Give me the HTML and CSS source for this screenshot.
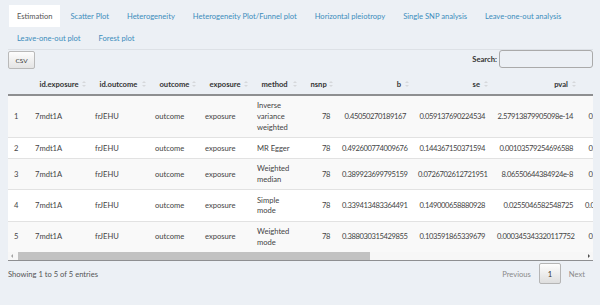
FILE: index.html
```html
<!DOCTYPE html>
<html lang="en">
<head>
    <meta charset="UTF-8">
    <title>MR results</title>
    <link rel="stylesheet" href="styles.css">
</head>
<body>
    <div class="page">
        <!-- tabs -->
        <ul class="nav-tabs">
            <li class="active"><a href="#">Estimation</a></li>
            <li><a href="#">Scatter Plot</a></li>
            <li><a href="#">Heterogeneity</a></li>
            <li><a href="#">Heterogeneity Plot/Funnel plot</a></li>
            <li><a href="#">Horizontal pleiotropy</a></li>
            <li><a href="#">Single SNP analysis</a></li>
            <li><a href="#">Leave-one-out analysis</a></li>
            <li><a href="#">Leave-one-out plot</a></li>
            <li><a href="#">Forest plot</a></li>
        </ul>

        <div class="tab-content">
            <div class="dt-top">
                <button class="dt-button">CSV</button>
                <label class="dt-search">Search: <input type="search"></label>
            </div>

            <div class="scroll-body">
                <table class="dt">
                    <colgroup>
                        <col class="w-idx"><col class="w-id"><col class="w-id"><col class="w-out">
                        <col class="w-exp"><col class="w-meth"><col class="w-nsnp"><col class="w-b">
                        <col class="w-se"><col class="w-pval"><col class="w-ci">
                    </colgroup>
                    <thead>
                        <tr>
                            <th></th>
                            <th class="sorting">id.exposure</th>
                            <th class="sorting">id.outcome</th>
                            <th class="sorting">outcome</th>
                            <th class="sorting">exposure</th>
                            <th class="sorting">method</th>
                            <th class="sorting num">nsnp</th>
                            <th class="sorting num">b</th>
                            <th class="sorting num">se</th>
                            <th class="sorting num">pval</th>
                            <th class="sorting num">lo_ci</th>
                        </tr>
                    </thead>
                    <tbody>
                        <tr>
                            <td>1</td><td>7mdt1A</td><td>frJEHU</td><td>outcome</td><td>exposure</td>
                            <td>Inverse variance weighted</td><td class="num">78</td>
                            <td class="num">0.45050270189167</td><td class="num">0.059137690224534</td>
                            <td class="num">2.57913879905098e-14</td><td class="num">0.334540235809672</td>
                        </tr>
                        <tr>
                            <td>2</td><td>7mdt1A</td><td>frJEHU</td><td>outcome</td><td>exposure</td>
                            <td>MR Egger</td><td class="num">78</td>
                            <td class="num">0.492600774009676</td><td class="num">0.144367150371594</td>
                            <td class="num">0.00103579254696588</td><td class="num">0.209641159282172</td>
                        </tr>
                        <tr>
                            <td>3</td><td>7mdt1A</td><td>frJEHU</td><td>outcome</td><td>exposure</td>
                            <td>Weighted median</td><td class="num">78</td>
                            <td class="num">0.389923699795159</td><td class="num">0.0726702612721951</td>
                            <td class="num">8.06550644384924e-8</td><td class="num">0.247489000849659</td>
                        </tr>
                        <tr>
                            <td>4</td><td>7mdt1A</td><td>frJEHU</td><td>outcome</td><td>exposure</td>
                            <td>Simple mode</td><td class="num">78</td>
                            <td class="num">0.339413483364491</td><td class="num">0.149000658880928</td>
                            <td class="num">0.0255046582548725</td><td class="num">0.0473721551887625</td>
                        </tr>
                        <tr>
                            <td>5</td><td>7mdt1A</td><td>frJEHU</td><td>outcome</td><td>exposure</td>
                            <td>Weighted mode</td><td class="num">78</td>
                            <td class="num">0.388030315429855</td><td class="num">0.103591865339679</td>
                            <td class="num">0.000345343320117752</td><td class="num">0.185000219364739</td>
                        </tr>
                    </tbody>
                </table>
            </div>

            <!-- horizontal scrollbar of the table -->
            <div class="h-scroll">
                <span class="arrow arrow-left"></span>
                <div class="thumb"></div>
                <span class="arrow arrow-right"></span>
            </div>

            <div class="dt-bottom">
                <div class="dt-info">Showing 1 to 5 of 5 entries</div>
                <div class="dt-paging">
                    <span class="page-link">Previous</span>
                    <span class="page-current">1</span>
                    <span class="page-link">Next</span>
                </div>
            </div>
        </div>
    </div>
</body>
</html>
```

FILE: styles.css
```css
body {
    margin: 0;
    background-color: #ecf0f5;
    font-family: Lato, "Open Sans", sans-serif;
    font-size: 7.6px;
    color: #333;
}

.page {
    padding: 5px 7px 0 8px;
}

/* tabs */
.nav-tabs {
    list-style: none;
    margin: 0;
    padding: 0 0 0 1px;
    display: flex;
    flex-wrap: wrap;
    border-bottom: 1px solid #dde1e6;
}

.nav-tabs li {
    margin-right: 2px;
}

.nav-tabs a {
    display: block;
    height: 22px;
    line-height: 22px;
    padding: 0 8px;
    font-size: 7.6px;
    color: #3c8dbc;
    text-decoration: none;
}

.nav-tabs li.active a {
    background-color: #fff;
    color: #555;
}

/* buttons + search */
.dt-top {
    display: flex;
    justify-content: space-between;
    align-items: flex-start;
    height: 20px;
}

.dt-button {
    margin-top: 1px;
    width: 27px;
    height: 18px;
    padding: 0;
    font-family: inherit;
    font-size: 6.5px;
    color: #333;
    border: 1px solid #b9b9b9;
    border-radius: 2px;
    background: linear-gradient(#fdfdfd, #e4e4e4);
}

.dt-search {
    display: flex;
    align-items: center;
    font-weight: bold;
}

.dt-search input {
    margin-left: 2px;
    width: 94px;
    height: 18px;
    box-sizing: border-box;
    border: 1px solid #aaa;
    border-radius: 3px;
    background: transparent;
}

/* table */
.scroll-body {
    margin-top: 3px;
    width: 585px;
    overflow: hidden;
}

.dt {
    table-layout: fixed;
    width: 652px;
    border-collapse: collapse;
}

.w-idx { width: 21px; }
.w-id { width: 60px; }
.w-out { width: 50px; }
.w-exp { width: 52px; }
.w-meth { width: 49px; }
.w-nsnp { width: 36px; }
.w-b { width: 76px; }
.w-se { width: 79px; }
.w-pval { width: 88px; }
.w-ci { width: 81px; }

.dt th {
    position: relative;
    height: 21px;
    padding: 0 11px 0 10.5px;
    text-align: left;
    white-space: nowrap;
    font-weight: bold;
    border-bottom: 2px solid #8e8f91;
}

.dt th.num {
    text-align: right;
}

/* sort arrows */
.dt th.sorting::before,
.dt th.sorting::after {
    content: "";
    position: absolute;
    right: 3px;
    border-left: 2px solid transparent;
    border-right: 2px solid transparent;
}

.dt th.sorting::before {
    top: 8px;
    border-bottom: 2.5px solid #d6d8db;
}

.dt th.sorting::after {
    top: 11.5px;
    border-top: 2.5px solid #d6d8db;
}

.dt td {
    padding: 4.4px 6px;
    line-height: 10.8px;
    border-top: 1px solid #e2e2e2;
    color: #444;
}

.dt tbody tr:first-child td {
    border-top: none;
}

.dt tbody tr:nth-child(odd) {
    background-color: #f9f9f9;
}

.dt tbody tr:nth-child(even) {
    background-color: #fff;
}

.dt td.num {
    text-align: right;
    white-space: nowrap;
    letter-spacing: -0.4px;
}

/* scrollbar */
.h-scroll {
    display: flex;
    align-items: center;
    width: 585px;
    height: 8px;
    background-color: #f7f7f7;
    border-bottom: 1px solid #8e8f91;
}

.thumb {
    margin-left: 5px;
    width: 352px;
    height: 100%;
    background-color: #c2c2c2;
}

.arrow {
    width: 0;
    height: 0;
    border-top: 2px solid transparent;
    border-bottom: 2px solid transparent;
}

.arrow-left {
    margin-left: 3px;
    border-right: 2px solid #a3a3a3;
}

.arrow-right {
    margin-left: auto;
    margin-right: 3px;
    border-left: 2px solid #505050;
}

/* info + paging */
.dt-bottom {
    display: flex;
    justify-content: space-between;
    align-items: center;
    margin-top: 2px;
    height: 22px;
}

.dt-info {
    color: #555;
}

.dt-paging {
    display: flex;
    align-items: center;
    gap: 8px;
    padding-right: 8px;
    color: #8a8a8a;
}

.page-current {
    display: flex;
    justify-content: center;
    align-items: center;
    width: 22px;
    height: 21px;
    box-sizing: border-box;
    color: #333;
    border: 1px solid #b5b5b5;
    border-radius: 2px;
    background: linear-gradient(#fdfdfd, #dedede);
}
```
